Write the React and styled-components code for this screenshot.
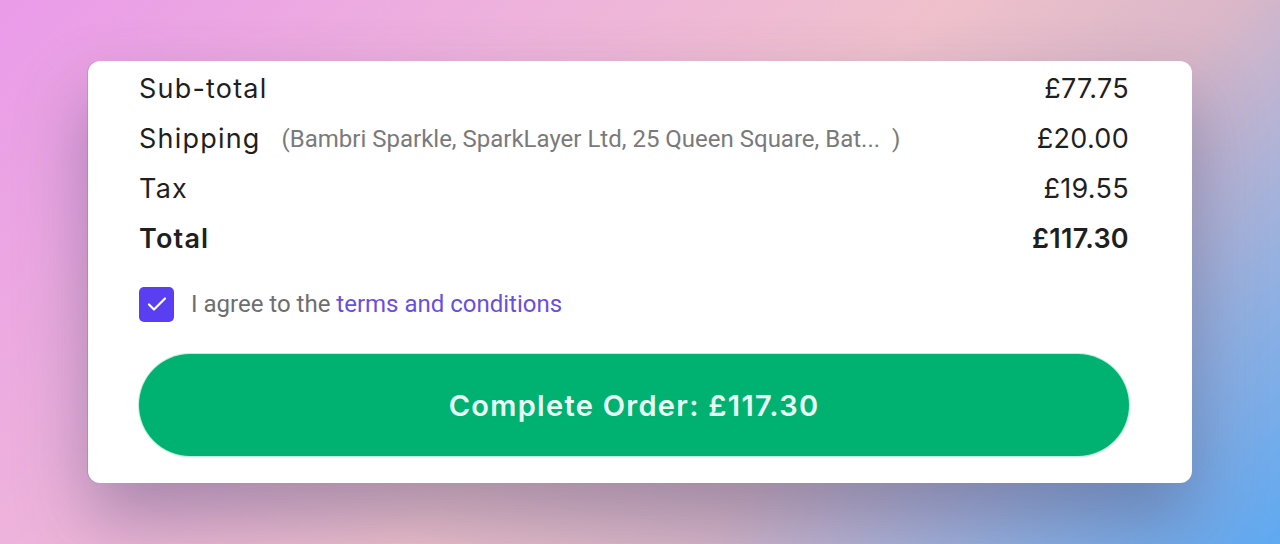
import React from "react";
import styled, { createGlobalStyle } from "styled-components";

const Global = createGlobalStyle`
  html, body { margin: 0; padding: 0; }
  body {
    width: 1280px;
    height: 544px;
    overflow: hidden;
    background: linear-gradient(135deg, #ea9be9 0%, #eeb3dc 30%, #efc1cc 52%, #dab7c8 68%, #8fb0e2 86%, #5ea9f1 100%);
    font-family: Inter, "Open Sans", sans-serif;
  }
`;

const Stage = styled.main`
  width: 1280px;
  height: 544px;
  display: flex;
  align-items: center;
  justify-content: center;
`;

const Card = styled.section`
  width: 1104px;
  height: 422px;
  box-sizing: border-box;
  background: #ffffff;
  border-radius: 12px;
  padding: 2px 63px 27px 51px;
  display: flex;
  flex-direction: column;
  box-shadow: 0 36px 70px rgba(70, 70, 110, 0.42), -1px 0 0 rgba(150, 140, 240, 0.5);
`;

const Row = styled.div`
  height: 50px;
  display: flex;
  align-items: center;
  justify-content: space-between;
  color: #1f1f1f;
  font-family: Inter, "Open Sans", sans-serif;
  font-size: 27px;
  font-weight: ${(p) => (p.$bold ? 600 : 400)};
`;

const Label = styled.div`
  display: flex;
  align-items: center;
  gap: 21px;
`;

const Term = styled.span`
  letter-spacing: 1.2px;
`;

const Amount = styled.span`
  letter-spacing: 0.3px;
`;

const Note = styled.span`
  font-family: Roboto, "Noto Sans", sans-serif;
  font-size: 24px;
  color: #7a7a7a;
  font-weight: 400;
  position: relative;
  top: 1px;
`;

const Agree = styled.label`
  display: flex;
  align-items: center;
  gap: 17px;
  margin-top: 24px;
  height: 34px;
  font-family: Roboto, "Noto Sans", sans-serif;
  font-size: 24px;
  color: #6e6e6e;
`;

const Box = styled.span`
  width: 35px;
  height: 35px;
  border-radius: 5px;
  background: #5a3ff2;
  display: flex;
  align-items: center;
  justify-content: center;
  flex-shrink: 0;
`;

const Link = styled.a`
  color: #6a4fdf;
  text-decoration: none;
`;

const Button = styled.button`
  margin-top: 33px;
  height: 102px;
  width: 100%;
  border: none;
  border-radius: 51px;
  background: #00b272;
  color: #eafff2;
  font-family: Inter, "Open Sans", sans-serif;
  font-size: 29px;
  font-weight: 600;
  letter-spacing: 1.3px;
  display: flex;
  align-items: center;
  justify-content: center;
  cursor: pointer;
  box-shadow: 0 0 0 1px rgba(120, 230, 180, 0.5);
`;

export default function App() {
  return (
    <>
      <Global />
      <Stage>
        <Card>
          <Row>
            <Term>Sub-total</Term>
            <Amount>£77.75</Amount>
          </Row>
          <Row>
            <Label>
              <Term>Shipping</Term>
              <Note>(Bambri Sparkle, SparkLayer Ltd, 25 Queen Square, Bat...&nbsp;&nbsp;)</Note>
            </Label>
            <Amount>£20.00</Amount>
          </Row>
          <Row>
            <Term>Tax</Term>
            <Amount>£19.55</Amount>
          </Row>
          <Row $bold>
            <Term>Total</Term>
            <Amount>£117.30</Amount>
          </Row>
          <Agree>
            <Box>
              <svg width="24" height="24" viewBox="0 0 24 24" fill="none" stroke="#ffffff" strokeWidth="2.2" strokeLinecap="round" strokeLinejoin="round">
                <path d="M4 12.5l5 5L20 6.5" />
              </svg>
            </Box>
            <span>
              I agree to the <Link href="#">terms and conditions</Link>
            </span>
          </Agree>
          <Button>Complete Order: £117.30</Button>
        </Card>
      </Stage>
    </>
  );
}
